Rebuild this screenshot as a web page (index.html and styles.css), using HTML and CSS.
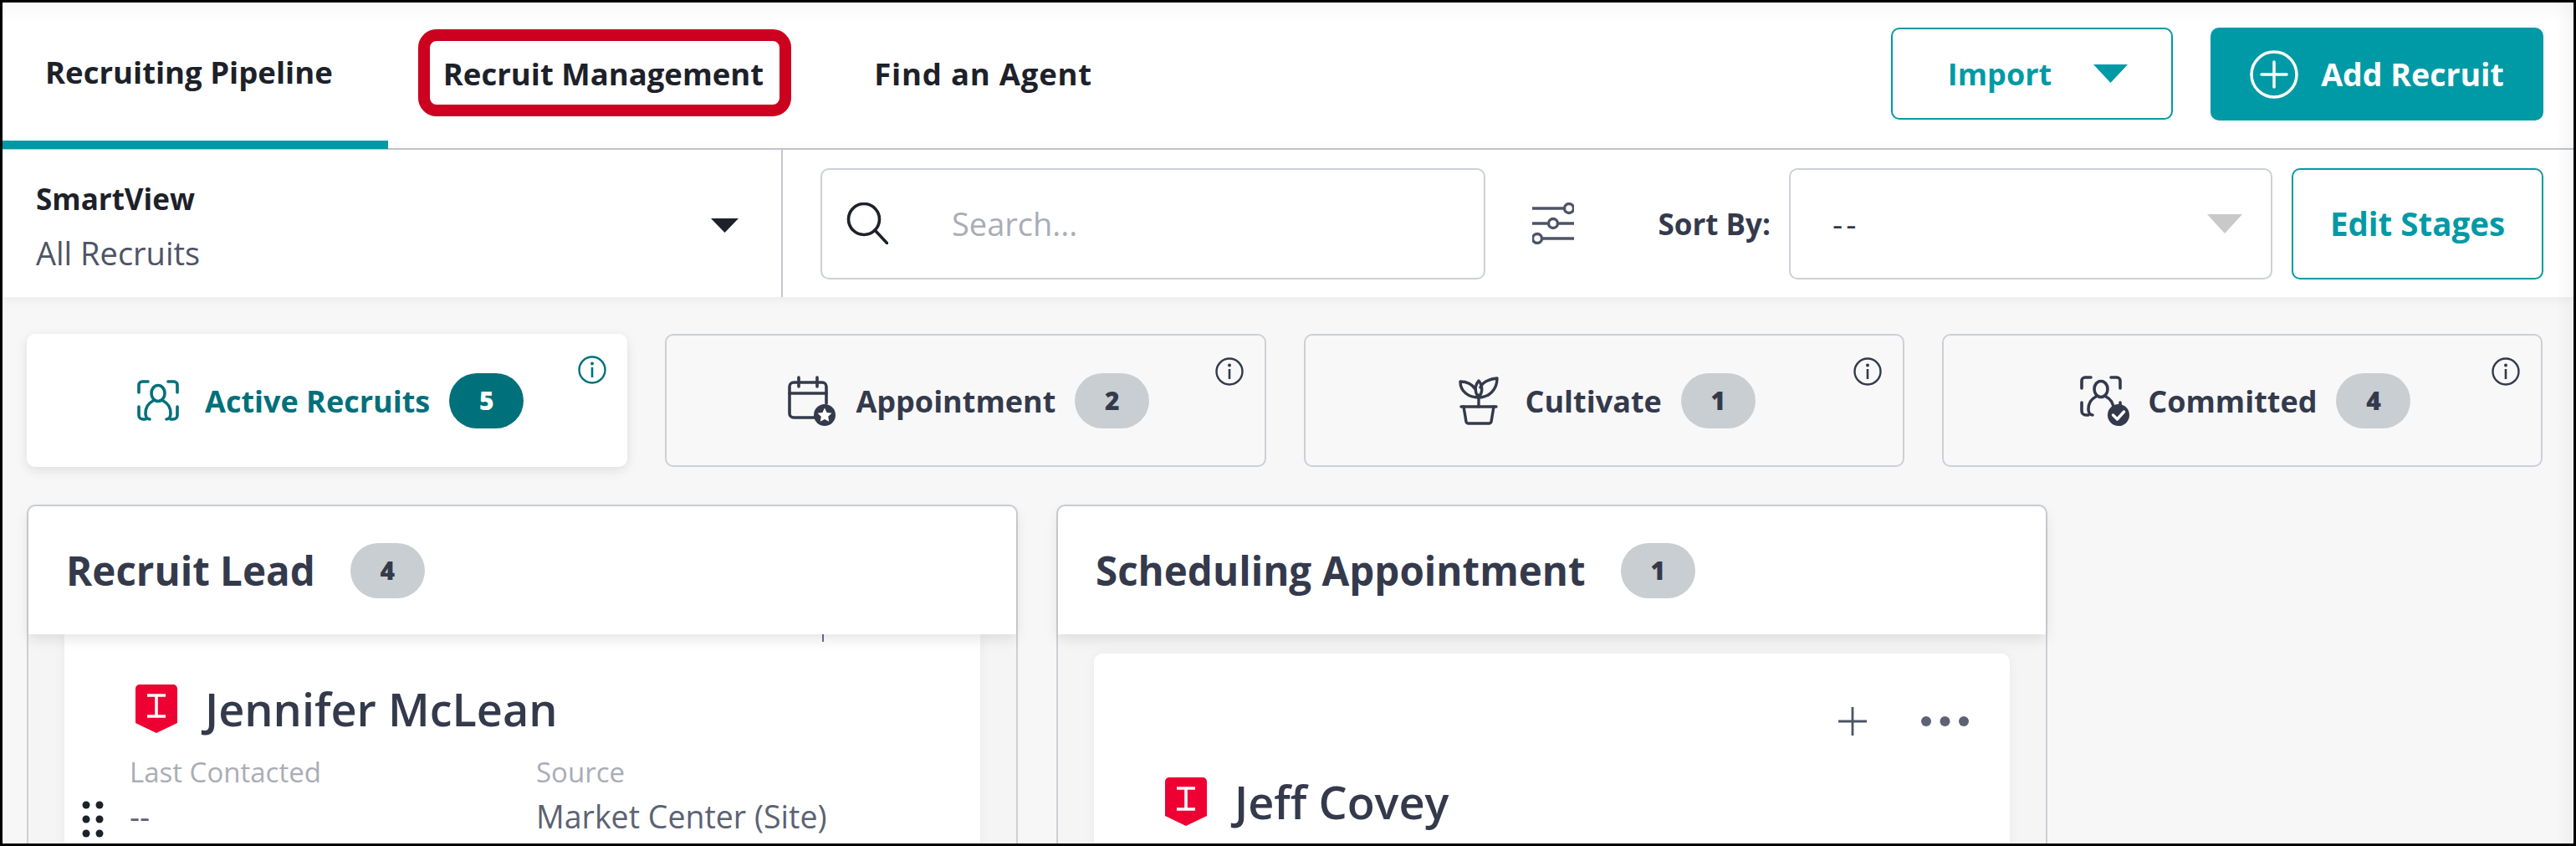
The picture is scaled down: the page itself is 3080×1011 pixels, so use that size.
FILE: index.html
```html
<!DOCTYPE html>
<html>
<head>
    <title>Recruiting Pipeline</title>
    <link rel="stylesheet" href="styles.css">
</head>
<body>
    <svg class="icon-defs" width="0" height="0">
        <symbol id="info" viewBox="0 0 34 34">
            <circle cx="17" cy="17" r="15.5" fill="none" stroke="currentColor" stroke-width="2.4"/>
            <circle cx="17" cy="9.5" r="2" fill="currentColor"/>
            <path d="M17 14v12" stroke="currentColor" stroke-width="2.6" fill="none"/>
        </symbol>
        <symbol id="face" viewBox="0 0 50 50">
            <g fill="none" stroke="currentColor" stroke-width="3.6" stroke-linecap="round" stroke-linejoin="round">
                <path d="M2 15V6a4 4 0 0 1 4-4h7"/>
                <path d="M37 2h7a4 4 0 0 1 4 4v9"/>
                <path d="M2 32v10a5 5 0 0 0 5 5h3"/>
                <path d="M48 32v10a5 5 0 0 1-5 5h-3"/>
                <ellipse cx="25" cy="16" rx="8" ry="9.5"/>
                <path d="M19 25c-6 3-9 9-9 15 0 4 2 7 5 7"/>
                <path d="M31 25c6 3 9 9 9 15 0 4-2 7-5 7"/>
            </g>
        </symbol>
        <symbol id="shield" viewBox="0 0 50 58">
            <path d="M5 0h40a5 5 0 0 1 5 5v41L25 58 0 46V5a5 5 0 0 1 5-5z" fill="#ee0033"/>
            <path d="M14 13h22M14 38h22M25 13v25" fill="none" stroke="#fff" stroke-width="3.6"/>
        </symbol>
    </svg>

    <div class="frame">
        <div class="top-bar">
            <div class="tabs">
                <a class="tab tab-active">Recruiting Pipeline</a>
                <a class="tab tab-marked">Recruit Management<span class="red-box"></span></a>
                <a class="tab tab-agent">Find an Agent</a>
            </div>
            <div class="top-actions">
                <button class="btn btn-import">Import
                    <svg class="caret-import" viewBox="0 0 41 22"><path d="M0 0h41L20.5 22z" fill="currentColor"/></svg>
                </button>
                <button class="btn btn-add">
                    <svg class="plus-circle" viewBox="0 0 58 58">
                        <g fill="none" stroke="#fff" stroke-width="3.5" stroke-linecap="round">
                            <circle cx="29" cy="29" r="27"/>
                            <path d="M29 14v30M14 29h30"/>
                        </g>
                    </svg>
                    Add Recruit
                </button>
            </div>
        </div>

        <div class="tool-bar">
            <div class="smartview">
                <div>
                    <div class="smartview-label">SmartView</div>
                    <div class="smartview-value">All Recruits</div>
                </div>
                <svg class="caret-smart" viewBox="0 0 33 17"><path d="M0 0h33L16.5 17z" fill="#1d2129"/></svg>
            </div>
            <div class="tools">
                <div class="search">
                    <svg class="search-icon" viewBox="0 0 50 50">
                        <g fill="none" stroke="#1d2129" stroke-width="3.6" stroke-linecap="round">
                            <circle cx="21" cy="20" r="18.5"/>
                            <path d="M34 33l15 16"/>
                        </g>
                    </svg>
                    <span class="search-text">Search...</span>
                </div>
                <svg class="filter-icon" viewBox="0 0 50 50">
                    <g fill="none" stroke="#4d5465" stroke-width="3.4">
                        <path d="M0 7h38M0 25h18M32 25h18M12 43h38"/>
                        <circle cx="44" cy="7" r="5.5"/>
                        <circle cx="25" cy="25" r="5.5"/>
                        <circle cx="6" cy="43" r="5.5"/>
                    </g>
                </svg>
                <span class="sort-label">Sort By:</span>
                <div class="sort-select">
                    <span class="sort-value">--</span>
                    <svg class="caret-sort" viewBox="0 0 42 23"><path d="M0 0h42L21 23z" fill="#c9c9c9"/></svg>
                </div>
                <button class="btn btn-edit">Edit Stages</button>
            </div>
        </div>

        <div class="board">
            <div class="stages">
                <div class="stage stage-active">
                    <svg class="stage-icon"><use href="#face"/></svg>
                    <span class="stage-name">Active Recruits</span>
                    <span class="pill">5</span>
                    <svg class="info"><use href="#info"/></svg>
                </div>
                <div class="stage">
                    <svg class="stage-icon icon-appt" viewBox="0 0 57 60">
                        <g fill="none" stroke="currentColor" stroke-width="3.6" stroke-linecap="round" stroke-linejoin="round">
                            <path d="M32 50H7a5 5 0 0 1-5-5V13a5 5 0 0 1 5-5h34a5 5 0 0 1 5 5v20"/>
                            <path d="M2 21h44M13 2v11M35 2v11"/>
                        </g>
                        <circle cx="44" cy="47" r="13" fill="currentColor"/>
                        <path d="M44 38.5l2.600 5.400 5.900.8-4.300 4.100 1 5.900-5.200-2.800-5.200 2.800 1-5.900-4.300-4.100 5.900-.8z" fill="#fff"/>
                    </svg>
                    <span class="stage-name">Appointment</span>
                    <span class="pill">2</span>
                    <svg class="info"><use href="#info"/></svg>
                </div>
                <div class="stage">
                    <svg class="stage-icon icon-plant" viewBox="0 0 48 58">
                        <g fill="none" stroke="currentColor" stroke-width="3.4" stroke-linecap="round" stroke-linejoin="round">
                            <path d="M3 36h42"/>
                            <path d="M6 36l3 18a3 3 0 0 0 3 2h24a3 3 0 0 0 3-2l3-18"/>
                            <path d="M24 36V22"/>
                            <path d="M24 25C12 25 2 18 2 6c8 0 14 3 18 9"/>
                            <path d="M24 25c12 0 22-9 22-23-9 1-17 4-20 11"/>
                            <path d="M24 25c-5-6-5-14 0-20 5 6 5 14 0 20z"/>
                        </g>
                    </svg>
                    <span class="stage-name">Cultivate</span>
                    <span class="pill">1</span>
                    <svg class="info"><use href="#info"/></svg>
                </div>
                <div class="stage">
                    <svg class="stage-icon icon-committed" viewBox="0 0 59 60">
                        <use href="#face" width="50" height="50"/>
                        <circle cx="46" cy="47" r="13" fill="currentColor"/>
                        <path d="M39.5 47l5 5 8-9" fill="none" stroke="#fff" stroke-width="3.4" stroke-linecap="round" stroke-linejoin="round"/>
                    </svg>
                    <span class="stage-name">Committed</span>
                    <span class="pill">4</span>
                    <svg class="info"><use href="#info"/></svg>
                </div>
            </div>

            <div class="columns">
                <section class="column">
                    <div class="column-head">
                        <h2>Recruit Lead</h2>
                        <span class="pill">4</span>
                    </div>
                    <div class="column-body">
                        <div class="recruit recruit-cut">
                            <span class="cut-tick"></span>
                            <div class="recruit-name">
                                <svg class="shield"><use href="#shield"/></svg>
                                Jennifer McLean
                            </div>
                            <div class="recruit-meta">
                                <div class="meta-label">Last Contacted</div>
                                <div class="meta-label">Source</div>
                                <div class="meta-value">--</div>
                                <div class="meta-value">Market Center (Site)</div>
                            </div>
                            <svg class="drag" viewBox="0 0 26 44">
                                <g fill="#1d2129">
                                    <circle cx="5" cy="5" r="4.5"/><circle cx="21" cy="5" r="4.5"/>
                                    <circle cx="5" cy="22" r="4.5"/><circle cx="21" cy="22" r="4.5"/>
                                    <circle cx="5" cy="39" r="4.5"/><circle cx="21" cy="39" r="4.5"/>
                                </g>
                            </svg>
                        </div>
                    </div>
                </section>
                <section class="column">
                    <div class="column-head">
                        <h2>Scheduling Appointment</h2>
                        <span class="pill">1</span>
                    </div>
                    <div class="column-body column-body-gap">
                        <div class="recruit">
                            <div class="recruit-actions">
                                <svg class="act-plus" viewBox="0 0 34 34"><path d="M17 0v34M0 17h34" stroke="#4d5465" stroke-width="2.8" fill="none"/></svg>
                                <svg class="act-more" viewBox="0 0 59 14">
                                    <g fill="#5c6273"><circle cx="7" cy="7" r="6"/><circle cx="29.5" cy="7" r="6"/><circle cx="52" cy="7" r="6"/></g>
                                </svg>
                            </div>
                            <div class="recruit-name">
                                <svg class="shield"><use href="#shield"/></svg>
                                Jeff Covey
                            </div>
                        </div>
                    </div>
                </section>
            </div>
        </div>
    </div>
</body>
</html>
```

FILE: styles.css
```css
* {
    box-sizing: border-box;
}

body {
    margin: 0;
    padding: 0;
    font-family: "Open Sans", "Noto Sans", sans-serif;
    color: #343a4c;
}

.icon-defs {
    position: absolute;
}

.frame {
    position: relative;
    width: 3080px;
    height: 1011px;
    border: 3px solid #000;
    overflow: hidden;
    background: #f7f7f8;
}

/* soft shading along the right edge of the capture */
.frame::after {
    content: "";
    position: absolute;
    top: 0;
    right: 0;
    bottom: 0;
    width: 22px;
    background: linear-gradient(to right, rgba(0, 0, 0, 0), rgba(0, 0, 0, 0.03));
    pointer-events: none;
}

button {
    font-family: inherit;
    cursor: pointer;
}

/* top row */
.top-bar {
    display: flex;
    justify-content: space-between;
    height: 176px;
    background: linear-gradient(#f9f9f9, #fff 24px);
    border-bottom: 2px solid #c3c8ce;
}

.tabs {
    display: flex;
}

.tab {
    position: relative;
    display: flex;
    align-items: center;
    height: 176px;
    padding: 0 66px 6px;
    font-size: 36.5px;
    font-weight: 700;
    color: #1d2129;
}

.tab-active {
    padding-left: 51px;
    border-bottom: 10px solid #009aa6;
    padding-bottom: 0;
    height: 175px;
}

.tab-agent {
    letter-spacing: 0.8px;
}

.red-box {
    position: absolute;
    left: 36px;
    right: 33px;
    top: 32px;
    height: 104px;
    border: 14px solid #cc001f;
    border-radius: 22px;
}

.top-actions {
    display: flex;
    gap: 45px;
    padding: 30px 36px 0 0;
}

.btn {
    display: flex;
    align-items: center;
    justify-content: center;
    border-radius: 10px;
    font-size: 36px;
    font-weight: 700;
}

.btn-import {
    width: 337px;
    height: 110px;
    gap: 50px;
    padding-left: 20px;
    background: #fff;
    border: 2px solid #009aa6;
    color: #009aa6;
}

.caret-import {
    width: 41px;
    height: 22px;
}

.btn-add {
    width: 398px;
    height: 111px;
    gap: 27px;
    font-size: 37.5px;
    background: #009aa6;
    border: 0;
    color: #fff;
}

.plus-circle {
    width: 58px;
    height: 58px;
}

/* second row */
.tool-bar {
    display: flex;
    height: 176px;
    background: #fff;
    box-shadow: 0 2px 14px rgba(0, 0, 0, 0.06);
    position: relative;
}

.smartview {
    display: flex;
    align-items: center;
    justify-content: space-between;
    width: 933px;
    padding: 5px 51px 0 40px;
    border-right: 2px solid #c3c8ce;
}

.smartview-label {
    font-size: 35px;
    line-height: 40px;
    font-weight: 700;
    color: #1d2129;
    margin-bottom: 24px;
}

.smartview-value {
    font-size: 38px;
    line-height: 40px;
    color: #4d5465;
}

.caret-smart {
    width: 33px;
    height: 17px;
}

.tools {
    display: flex;
    flex: 1;
    align-items: center;
    padding: 0 36px 0 45px;
}

.search {
    display: flex;
    align-items: center;
    width: 795px;
    height: 133px;
    padding-left: 29px;
    background: #fff;
    border: 2px solid #ccd0d5;
    border-radius: 10px;
}

.search-icon {
    width: 50px;
    height: 50px;
}

.search-text {
    margin-left: 76px;
    font-size: 38px;
    color: #a9adb5;
}

.filter-icon {
    width: 50px;
    height: 50px;
    margin-left: 56px;
}

.sort-label {
    margin-left: auto;
    font-size: 35px;
    font-weight: 700;
    color: #343a4c;
}

.sort-select {
    display: flex;
    align-items: center;
    justify-content: space-between;
    width: 578px;
    height: 133px;
    margin-left: 22px;
    padding: 0 34px 0 50px;
    border: 2px solid #ccd0d5;
    border-radius: 10px;
    font-size: 38px;
    color: #343a4c;
}

.sort-value {
    letter-spacing: 4px;
}

.caret-sort {
    width: 42px;
    height: 23px;
}

.btn-edit {
    width: 301px;
    height: 133px;
    margin-left: 23px;
    font-size: 38.5px;
    background: #fff;
    border: 2px solid #009aa6;
    color: #009aa6;
}

/* stage cards */
.board {
    padding: 44px 37px 0 29px;
}

.stages {
    display: grid;
    grid-template-columns: repeat(4, 1fr);
    gap: 45px;
}

.stage {
    position: relative;
    display: flex;
    align-items: center;
    justify-content: center;
    height: 159px;
    padding-left: 8px;
    background: #f8f8f9;
    border: 2px solid #ccd0d5;
    border-radius: 10px;
    color: #343a4c;
}

.stage-active {
    background: #fff;
    border: 0;
    color: #00707a;
    box-shadow: 0 4px 14px rgba(0, 0, 0, 0.1);
}

.stage-icon {
    width: 50px;
    height: 50px;
    margin-right: 31px;
}

.icon-appt {
    width: 57px;
    height: 60px;
    margin-right: 24px;
}

.icon-plant {
    width: 48px;
    height: 58px;
}

.icon-committed {
    width: 59px;
    height: 60px;
    margin-right: 22px;
}

.stage-name {
    font-size: 36px;
    line-height: 48px;
    padding-top: 2px;
    font-weight: 700;
    margin-right: 23px;
}

.pill {
    display: flex;
    align-items: center;
    justify-content: center;
    width: 89px;
    height: 66px;
    border-radius: 33px;
    background: #c9ced2;
    color: #343a4c;
    font-size: 30px;
    font-weight: 800;
}

.stage-active .pill {
    background: #00707a;
    color: #fff;
}

.info {
    position: absolute;
    top: 26px;
    right: 25px;
    width: 34px;
    height: 34px;
}

/* pipeline columns */
.columns {
    display: grid;
    grid-template-columns: repeat(2, 1185px);
    gap: 46px;
    margin-top: 45px;
}

.column {
    height: 500px;
    background: #f5f5f6;
    border: 2px solid #ccd0d5;
    border-bottom: 0;
    border-radius: 10px 10px 0 0;
}

.column-head {
    position: relative;
    z-index: 1;
    display: flex;
    align-items: center;
    gap: 42px;
    height: 153px;
    padding-left: 45px;
    background: #fff;
    border-radius: 10px 10px 0 0;
    box-shadow: 0 6px 16px rgba(0, 0, 0, 0.1);
}

.column-head h2 {
    margin: 0;
    font-size: 47.5px;
    font-weight: 700;
    color: #343a4c;
}

.column-body {
    padding: 0 43px;
}

.column-body-gap {
    padding-top: 23px;
}

.recruit {
    position: relative;
    height: 400px;
    background: #fff;
    border-radius: 10px;
    box-shadow: 0 0 14px rgba(0, 0, 0, 0.05);
}

.recruit-cut {
    padding-top: 60px;
    border-radius: 0;
}

.cut-tick {
    position: absolute;
    top: 0;
    left: 906px;
    width: 2px;
    height: 9px;
    background: #6b7080;
}

.recruit-name {
    display: flex;
    align-items: center;
    gap: 33px;
    height: 58px;
    padding-left: 85px;
    font-size: 54px;
    font-weight: 600;
    color: #343a4c;
}

.shield {
    width: 50px;
    height: 58px;
}

.recruit-meta {
    display: grid;
    grid-template-columns: 486px 1fr;
    row-gap: 16px;
    padding: 30px 0 0 78px;
}

.meta-label {
    font-size: 33px;
    line-height: 34px;
    color: #a9adb5;
}

.meta-value {
    font-size: 37.5px;
    line-height: 40px;
    color: #5c6273;
}

.drag {
    position: absolute;
    left: 21px;
    top: 199px;
    width: 26px;
    height: 44px;
}

.recruit-actions {
    display: flex;
    justify-content: flex-end;
    align-items: center;
    gap: 64px;
    padding: 64px 48px 50px 0;
}

.act-plus {
    width: 34px;
    height: 34px;
}

.act-more {
    width: 59px;
    height: 14px;
}
```
